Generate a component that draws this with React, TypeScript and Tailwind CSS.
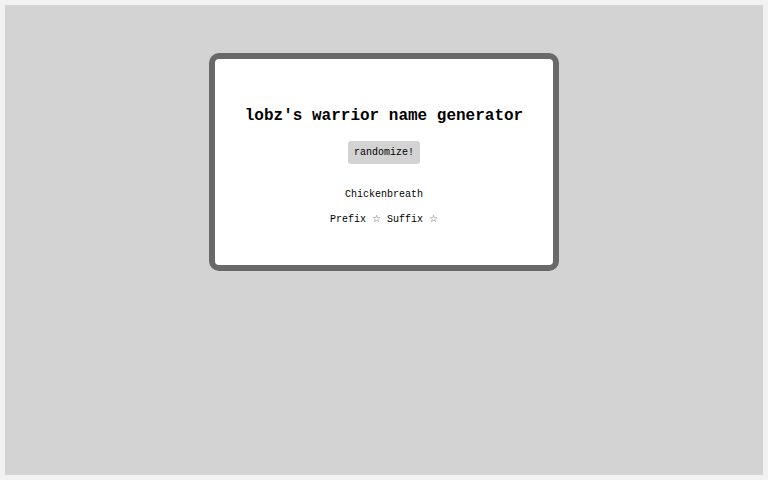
export default function App() {
  const mono = { fontFamily: '"Liberation Mono", "DejaVu Sans Mono", monospace' };
  const star = { fontFamily: '"DejaVu Sans", sans-serif' };
  return (
    <div className="h-[480px] w-[768px] bg-[#f2f2f2] p-[5px]" style={mono}>
      <div className="h-full w-full bg-[#d3d3d3] pt-[48px]">
        <div className="mx-auto w-[350px] rounded-[10px] border-[6px] border-[#696969] bg-white pt-[47px] pb-[38px] text-black">
          <div className="flex flex-col items-center">
            <h1 className="text-[16px] font-bold leading-[20px]">lobz's warrior name generator</h1>
            <button className="mt-[15px] h-[23px] rounded-[3px] bg-[#d3d3d3] px-[6px] text-[10px] leading-[23px]">
              randomize!
            </button>
            <div className="mt-[24px] text-[10px] leading-[14px]">Chickenbreath</div>
            <div className="mt-[10px] text-[10px] leading-[14px]">
              Prefix <span className="text-[#444]" style={star}>☆</span> Suffix{' '}
              <span className="text-[#444]" style={star}>☆</span>
            </div>
          </div>
        </div>
      </div>
    </div>
  );
}
